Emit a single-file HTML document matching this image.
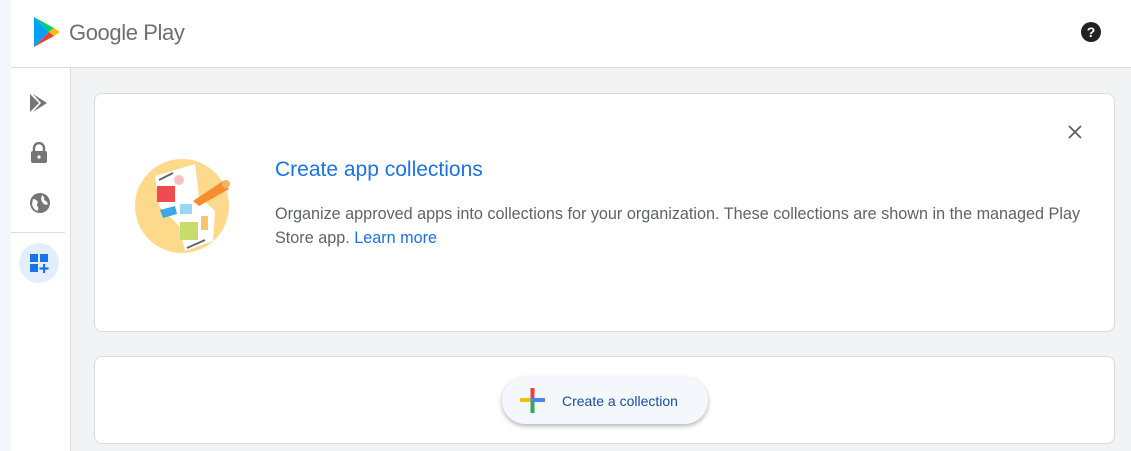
<!DOCTYPE html>
<html><head><style>
*{margin:0;padding:0;box-sizing:border-box}
body{width:1131px;height:451px;overflow:hidden;font-family:"Liberation Sans",Arial,sans-serif;background:#f1f3f4;position:relative}
.strip{position:absolute;left:0;top:0;width:11px;height:451px;background:#f3f7fd}
.hdr{position:absolute;left:11px;top:0;right:0;height:68px;background:#fff;border-bottom:1px solid #dadce0}
.side{position:absolute;left:11px;top:68px;width:60px;bottom:0;background:#fff;border-right:1px solid #dadce0}
.card{position:absolute;left:94px;right:16px;background:#fff;border:1px solid #dadce0;border-radius:8px}
</style></head><body>
<div class="strip"></div>
<div class="hdr">
<svg style="position:absolute;left:21px;top:16px" width="30" height="32" viewBox="0 0 30 32">
<path d="M2 1 L17 16 L2 31 Z" fill="#00a0ff"/><path d="M2 1 L22 12 L17 16 Z" fill="#00d26a"/><path d="M2 31 L22 20 L17 16 Z" fill="#ea4335"/><path d="M22 12 L28 16 L22 20 L17 16 Z" fill="#fbbc04"/></svg>
<div style="position:absolute;left:58px;top:20px;font-size:22px;color:#6f6f6f;letter-spacing:-0.4px">Google Play</div>
<svg style="position:absolute;left:1070px;top:22px" width="20" height="20" viewBox="0 0 20 20"><circle cx="10" cy="10" r="10" fill="#202124"/><text x="10" y="15" font-size="14" font-weight="bold" fill="#fff" text-anchor="middle" font-family="Liberation Sans">?</text></svg>
</div>
<div class="side">
<svg style="position:absolute;left:18px;top:25px" width="20" height="20" viewBox="0 0 20 20"><path d="M1 1 L10 10 L1 19 Z M4 1 L18 10 L4 19 L12 10 Z" fill="#757575"/></svg>
<svg style="position:absolute;left:19px;top:74px" width="18" height="22" viewBox="0 0 18 22"><path d="M4 9 V6 a5 5 0 0 1 10 0 V9" stroke="#757575" stroke-width="2.4" fill="none"/><rect x="1" y="9" width="16" height="12" rx="2" fill="#757575"/><circle cx="9" cy="15" r="1.6" fill="#fff"/></svg>
<svg style="position:absolute;left:18px;top:124px" width="22" height="22" viewBox="0 0 22 22"><circle cx="11" cy="11" r="10" fill="#757575"/><path d="M4 7 q3 0 5 3 q-2 3 0 5 q1 3 -1 4 q-4 -2 -5 -7 Z M13 3 q3 2 2 5 q3 1 4 4 q-3 2 -5 -1 q-3 -3 -1 -8Z" fill="#fff"/></svg>
<div style="position:absolute;left:0;top:164px;width:54px;border-top:1px solid #dadce0"></div>
<div style="position:absolute;left:8px;top:175px;width:40px;height:40px;border-radius:50%;background:#e3eefc"></div>
<svg style="position:absolute;left:19px;top:186px" width="19" height="19" viewBox="0 0 19 19"><g fill="#1a73e8"><rect x="0" y="0" width="8" height="8"/><rect x="10" y="0" width="8" height="8"/><rect x="0" y="10" width="8" height="8"/><rect x="13" y="10" width="2.2" height="9"/><rect x="9.5" y="13.4" width="9" height="2.2"/></g></svg>
</div>
<div class="card" style="top:93px;height:239px">
<svg style="position:absolute;left:40px;top:62px" width="100" height="100" viewBox="0 0 100 100">
<circle cx="47" cy="50" r="47" fill="#fdd98b"/>
<path d="M20 20 L60 8 L64 40 L80 55 L78 85 L50 95 L44 70 L24 50 Z" fill="#fff"/>
<rect x="22" y="30" width="18" height="16" fill="#ef4a4f"/>
<circle cx="44" cy="24" r="5" fill="#f8bfc7"/>
<path d="M25 54 L40 50 L42 58 L28 62Z" fill="#3aa8e8"/>
<rect x="45" y="48" width="12" height="10" fill="#9cd6f5"/>
<rect x="45" y="66" width="18" height="18" fill="#c7dc6c"/>
<rect x="66" y="60" width="7" height="14" fill="#fbc36b"/>
<line x1="24" y1="24" x2="38" y2="17" stroke="#666" stroke-width="2"/>
<line x1="52" y1="92" x2="70" y2="84" stroke="#666" stroke-width="2"/>
<path d="M58 45 L88 25 L94 33 L64 50 Z" fill="#f68d2e"/>
<circle cx="91" cy="28" r="4" fill="#f8b26a"/>
</svg>
<div style="position:absolute;left:180px;top:64px;font-size:21px;color:#1a73e8">Create app collections</div>
<div style="position:absolute;left:180px;top:108px;width:818px;font-size:16.2px;line-height:24px;color:#5f6368">Organize approved apps into collections for your organization. These collections are shown in the managed Play Store app. <span style="color:#1a73e8">Learn more</span></div>
<svg style="position:absolute;left:973px;top:31px" width="14" height="14" viewBox="0 0 14 14"><path d="M1 1 L13 13 M13 1 L1 13" stroke="#5f6368" stroke-width="1.8"/></svg>
</div>
<div class="card" style="top:356px;height:88px">
<div style="position:absolute;left:407px;top:20px;width:206px;height:47px;border-radius:24px;background:#f4f8fd;box-shadow:0 2px 5px rgba(0,0,0,0.3)">
<svg style="position:absolute;left:18px;top:11px" width="25" height="25" viewBox="0 0 25 25"><rect x="0" y="10" width="11" height="4" fill="#fbbc04"/><rect x="10.5" y="0" width="4" height="11" fill="#ea4335"/><rect x="14" y="10" width="11" height="4" fill="#4285f4"/><rect x="10.5" y="14" width="4" height="11" fill="#34a853"/><rect x="10.5" y="10" width="4" height="4" fill="#4285f4"/></svg>
<div style="position:absolute;left:60px;top:16px;font-size:14px;color:#174ea6">Create a collection</div>
</div>
</div>
</body></html>
